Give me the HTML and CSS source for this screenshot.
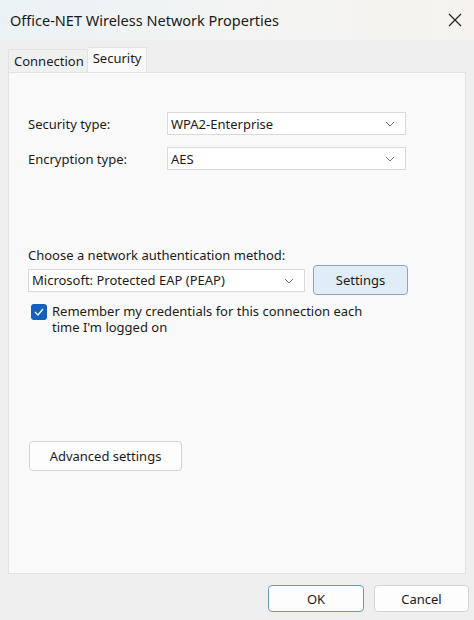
FILE: index.html
```html
<!DOCTYPE html>
<html>
<head>
<meta charset="utf-8">
<link rel="stylesheet" href="styles.css">
</head>
<body>
<div class="window">
  <div class="titlebar">
    <span class="title">Office-NET Wireless Network Properties</span>
    <svg class="close" width="14" height="14" viewBox="0 0 14 14"><path d="M1 1L13 13M13 1L1 13" stroke="#222" stroke-width="1.2" fill="none"/></svg>
  </div>
  <div class="tabs">
    <div class="tab">Connection</div>
    <div class="tab active">Security</div>
  </div>
  <div class="panel">
    <div class="row first">
      <span class="label">Security type:</span>
      <div class="select wide"><span>WPA2-Enterprise</span><svg class="chev" width="10" height="6" viewBox="0 0 10 6"><path d="M1 1L5 5L9 1" stroke="#777" stroke-width="1" fill="none"/></svg></div>
    </div>
    <div class="row second">
      <span class="label">Encryption type:</span>
      <div class="select wide"><span>AES</span><svg class="chev" width="10" height="6" viewBox="0 0 10 6"><path d="M1 1L5 5L9 1" stroke="#777" stroke-width="1" fill="none"/></svg></div>
    </div>
    <div class="auth-label">Choose a network authentication method:</div>
    <div class="auth-row">
      <div class="select method"><span>Microsoft: Protected EAP (PEAP)</span><svg class="chev" width="10" height="6" viewBox="0 0 10 6"><path d="M1 1L5 5L9 1" stroke="#777" stroke-width="1" fill="none"/></svg></div>
      <button class="btn settings">Settings</button>
    </div>
    <div class="check-row">
      <span class="checkbox"><svg width="10" height="8" viewBox="0 0 10 8"><path d="M1 4L4 7L9 1" stroke="#fff" stroke-width="1.3" fill="none"/></svg></span>
      <span class="check-text">Remember my credentials for this connection each time I'm logged on</span>
    </div>
    <button class="btn advanced">Advanced settings</button>
  </div>
  <div class="footer">
    <button class="btn ok">OK</button>
    <button class="btn cancel">Cancel</button>
  </div>
</div>
</body>
</html>
```
FILE: styles.css
```css
* { box-sizing: border-box; }
html, body { margin: 0; padding: 0; }
body {
  width: 474px;
  height: 620px;
  overflow: hidden;
  font-family: "Noto Sans", "Open Sans", sans-serif;
  font-size: 13px;
  color: #1b1b1b;
  background: #efefef;
}
.window {
  width: 474px;
  height: 620px;
  display: flex;
  flex-direction: column;
  background: #efefef;
}
.titlebar {
  height: 40px;
  display: flex;
  align-items: center;
  justify-content: space-between;
  padding: 0 12px 0 10px;
  background: linear-gradient(90deg, #eaf2f6 0%, #f3f4f3 50%, #f6f3ef 100%);
}
.title { font-size: 14.5px; color: #1a1a1a; }
.tabs {
  display: flex;
  align-items: flex-end;
  height: 32px;
  padding-left: 8px;
}
.tab {
  height: 23px;
  padding: 0 3px 0 5px;
  line-height: 23px;
  background: #f0f0f0;
  border: 1px solid #e2e2e2;
  border-bottom: none;
}
.tab.active {
  height: 25px;
  line-height: 20px;
  background: #f9f9f9;
  border-left: none;
  padding: 0 5px 0 5px;
}
.panel {
  margin: 0 8px 0 8px;
  height: 502px;
  background: #f9f9f9;
  border: 1px solid #e2e2e2;
  padding: 0 0 0 19px;
  display: flex;
  flex-direction: column;
  align-items: flex-start;
}
.row {
  display: flex;
  align-items: center;
  height: 23px;
}
.row.first { margin-top: 39px; }
.row.second { margin-top: 12px; }
.label { width: 139px; }
.select {
  display: flex;
  align-items: center;
  justify-content: space-between;
  height: 23px;
  background: #fff;
  border: 1px solid #dadada;
  padding: 0 10px 0 3px;
}
.select.wide { width: 239px; }
.select.method { width: 277px; }
.chev { margin-top: 1px; }
.auth-label { margin-top: 76px; line-height: 19px; }
.auth-row {
  display: flex;
  align-items: center;
  gap: 8px;
  margin-top: 0;
}
.btn {
  font-family: "Noto Sans", "Open Sans", sans-serif;
  font-size: 13px;
  color: #1b1b1b;
  background: #fdfdfd;
  border: 1px solid #d4d4d4;
  border-radius: 4px;
  padding: 0;
}
.settings {
  width: 95px;
  height: 30px;
  background: #e0edf8;
  border-color: #86a8c6;
}
.check-row {
  display: flex;
  align-items: flex-start;
  margin-top: 8px;
  margin-left: 3px;
  width: 340px;
}
.checkbox {
  flex: none;
  width: 16px;
  height: 16px;
  border-radius: 3px;
  background: #1560bd;
  display: flex;
  align-items: center;
  justify-content: center;
  margin-top: 1px;
  margin-right: 5px;
}
.check-text { line-height: 16px; }
.advanced {
  margin-top: 106px;
  margin-left: 1px;
  width: 153px;
  height: 30px;
}
.footer {
  display: flex;
  justify-content: flex-end;
  gap: 10px;
  padding: 11px 5px 0 0;
}
.ok, .cancel {
  width: 95px;
  height: 27px;
}
.ok { border-color: #6d97bd; width: 96px; }
```
